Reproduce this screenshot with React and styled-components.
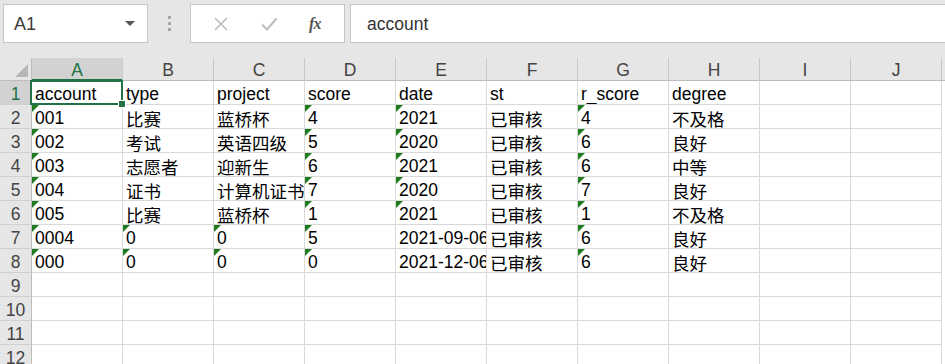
import React from "react";
import styled, { createGlobalStyle, css } from "styled-components";

const Global = createGlobalStyle`
  html, body { margin: 0; padding: 0; background: #ffffff; overflow: hidden; }
  body { font-family: "Liberation Sans", "Noto Sans CJK SC", Arial, sans-serif; }
`;

const Page = styled.div`
  width: 945px;
  height: 364px;
  display: flex;
  flex-direction: column;
  background: #e6e6e6;
  overflow: hidden;
`;

const Toolbar = styled.div`
  height: 58px;
  box-sizing: border-box;
  padding: 4px 0 0 3px;
  display: flex;
  align-items: flex-start;
  background: #e6e6e6;
  flex-shrink: 0;
`;

const Box = styled.div`
  height: 39px;
  box-sizing: border-box;
  background: #ffffff;
  border: 1px solid #c6c6c6;
  display: flex;
  align-items: center;
`;

const NameBox = styled(Box)`
  width: 145px;
  padding: 2px 10px 0 10px;
  justify-content: space-between;
  font-size: 18px;
  color: #3a3a3a;
`;

const Caret = styled.span`
  width: 0;
  height: 0;
  border-left: 5px solid transparent;
  border-right: 5px solid transparent;
  border-top: 5px solid #555;
  margin: -2px 2px 0 0;
`;

const Dots = styled.div`
  width: 42px;
  height: 39px;
  display: flex;
  flex-direction: column;
  align-items: center;
  justify-content: center;
  gap: 3px;
  span {
    width: 3px;
    height: 3px;
    background: #a6a6a6;
  }
`;

const FxBox = styled(Box)`
  width: 155px;
  justify-content: space-around;
  padding: 0 8px 0 6px;
`;

const FxLabel = styled.span`
  font-family: "Liberation Serif", "DejaVu Serif", serif;
  font-style: italic;
  font-weight: bold;
  font-size: 16px;
  color: #555;
  letter-spacing: -1px;
`;

const FormulaInput = styled(Box)`
  flex: 1;
  margin-left: 5px;
  border-right: none;
  padding: 2px 0 0 16px;
  font-size: 17.5px;
  color: #333;
`;

const Grid = styled.div`
  display: grid;
  grid-template-columns: 32px repeat(10, 91px) 1fr;
  grid-auto-rows: 24px;
  grid-template-rows: 23px;
  background: #ffffff;
  flex: 1;
  overflow: hidden;
`;

const HeadCell = styled.div`
  box-sizing: border-box;
  background: ${(p) => (p.$sel ? "#d2d2d2" : "#e6e6e6")};
  border-right: 1px solid #c8c8c8;
  border-bottom: 1px solid ${(p) => (p.$sel ? "#217346" : "#bdbdbd")};
  ${(p) => p.$sel && css`box-shadow: inset 0 -1px 0 #217346;`}
  color: ${(p) => (p.$sel ? "#217346" : "#444")};
  font-size: 17.5px;
  padding-top: 3px;
  display: flex;
  align-items: center;
  justify-content: center;
`;

const Corner = styled(HeadCell)`
  position: relative;
  border-right: 1px solid #bdbdbd;
  &::after {
    content: "";
    position: absolute;
    right: 3px;
    bottom: 3px;
    width: 0;
    height: 0;
    border-left: 13px solid transparent;
    border-bottom: 13px solid #b7b7b7;
  }
`;

const Filler = styled.div`
  background: #e6e6e6;
  border-bottom: 1px solid #bdbdbd;
`;

const RowHead = styled.div`
  box-sizing: border-box;
  background: ${(p) => (p.$sel ? "#d2d2d2" : "#e6e6e6")};
  border-right: 1px solid ${(p) => (p.$sel ? "#217346" : "#bdbdbd")};
  border-bottom: 1px solid #d0d0d0;
  color: ${(p) => (p.$sel ? "#217346" : "#444")};
  font-size: 17.5px;
  padding-top: 3px;
  display: flex;
  align-items: center;
  justify-content: center;
`;

const Cell = styled.div`
  position: relative;
  box-sizing: border-box;
  border-right: 1px solid #d9d9d9;
  border-bottom: 1px solid #d9d9d9;
  font-size: 17.5px;
  color: #000;
  padding: 3px 0 0 3px;
  white-space: nowrap;
  overflow: hidden;
  display: flex;
  align-items: center;
  ${(p) =>
    p.$flag &&
    css`
      &::before {
        content: "";
        position: absolute;
        left: 0;
        top: 0;
        width: 0;
        height: 0;
        border-top: 7px solid #1e7b1e;
        border-right: 7px solid transparent;
      }
    `}
`;

const SelCell = styled(Cell)`
  overflow: visible;
  z-index: 2;
  &::after {
    content: "";
    position: absolute;
    left: -2px;
    top: -1px;
    right: -1px;
    bottom: -1px;
    border: 2px solid #217346;
    pointer-events: none;
  }
`;

const Handle = styled.span`
  position: absolute;
  right: -4px;
  bottom: -4px;
  width: 6px;
  height: 6px;
  background: #217346;
  border: 1px solid #ffffff;
  z-index: 3;
`;

const EmptyEdge = styled.div`
  background: #ffffff;
`;

const cols = ["A", "B", "C", "D", "E", "F", "G", "H", "I", "J"];

// [text, flag]
const data = [
  [["account"], ["type"], ["project"], ["score"], ["date"], ["st"], ["r_score"], ["degree"], [""], [""]],
  [["001", 1], ["比赛"], ["蓝桥杯"], ["4", 1], ["2021", 1], ["已审核"], ["4", 1], ["不及格"], [""], [""]],
  [["002", 1], ["考试"], ["英语四级"], ["5", 1], ["2020", 1], ["已审核"], ["6", 1], ["良好"], [""], [""]],
  [["003", 1], ["志愿者"], ["迎新生"], ["6", 1], ["2021", 1], ["已审核"], ["6", 1], ["中等"], [""], [""]],
  [["004", 1], ["证书"], ["计算机证书"], ["7", 1], ["2020", 1], ["已审核"], ["7", 1], ["良好"], [""], [""]],
  [["005", 1], ["比赛"], ["蓝桥杯"], ["1", 1], ["2021", 1], ["已审核"], ["1", 1], ["不及格"], [""], [""]],
  [["0004", 1], ["0", 1], ["0", 1], ["5", 1], ["2021-09-06"], ["已审核"], ["6", 1], ["良好"], [""], [""]],
  [["000", 1], ["0", 1], ["0", 1], ["0", 1], ["2021-12-06"], ["已审核"], ["6", 1], ["良好"], [""], [""]],
];

const emptyRow = cols.map(() => [""]);
const rows = [...data, emptyRow, emptyRow, emptyRow, emptyRow];

const XIcon = () => (
  <svg width="16" height="16" viewBox="0 0 16 16">
    <path d="M2 2 L14 14 M14 2 L2 14" stroke="#bdbdbd" strokeWidth="1.6" fill="none" />
  </svg>
);

const CheckIcon = () => (
  <svg width="18" height="16" viewBox="0 0 18 16">
    <path d="M2 8.5 L7 13.5 L16.5 2.5" stroke="#bdbdbd" strokeWidth="2" fill="none" />
  </svg>
);

export default function App() {
  return (
    <>
      <Global />
      <Page>
        <Toolbar>
          <NameBox>
            <span>A1</span>
            <Caret />
          </NameBox>
          <Dots>
            <span />
            <span />
            <span />
          </Dots>
          <FxBox>
            <XIcon />
            <CheckIcon />
            <FxLabel>fx</FxLabel>
          </FxBox>
          <FormulaInput>account</FormulaInput>
        </Toolbar>
        <Grid>
          <Corner />
          {cols.map((c, i) => (
            <HeadCell key={c} $sel={i === 0}>
              {c}
            </HeadCell>
          ))}
          <Filler />
          {rows.map((r, ri) => (
            <React.Fragment key={ri}>
              <RowHead $sel={ri === 0}>{ri + 1}</RowHead>
              {r.map(([t, f], ci) =>
                ri === 0 && ci === 0 ? (
                  <SelCell key={ci}>
                    {t}
                    <Handle />
                  </SelCell>
                ) : (
                  <Cell key={ci} $flag={!!f}>
                    {t}
                  </Cell>
                )
              )}
              <EmptyEdge />
            </React.Fragment>
          ))}
        </Grid>
      </Page>
    </>
  );
}
